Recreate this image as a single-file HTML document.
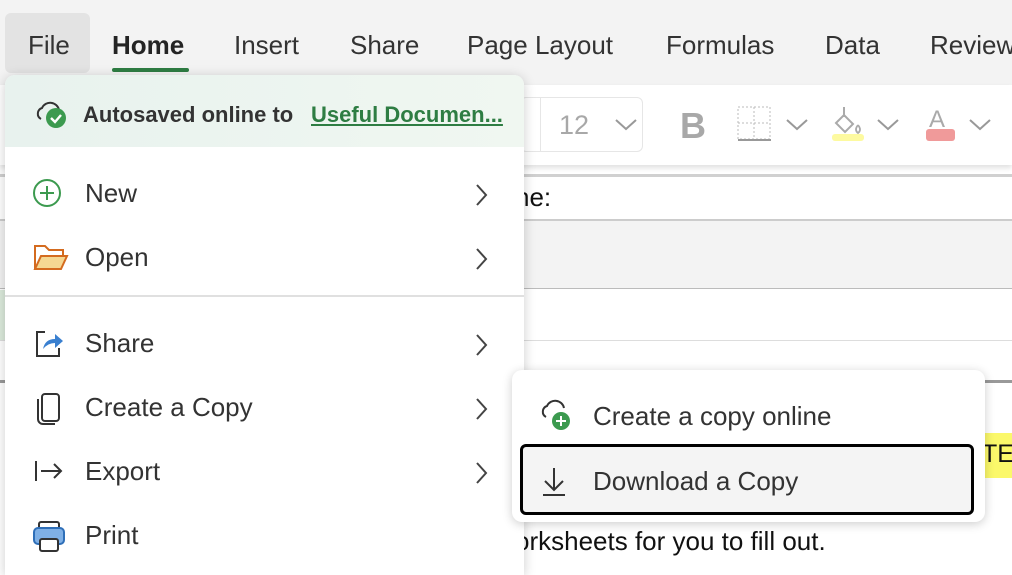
<!DOCTYPE html>
<html><head><style>
*{margin:0;padding:0;box-sizing:border-box}
body{width:1012px;height:562px;overflow:hidden;background:#fff;font-family:"Liberation Sans",sans-serif;position:relative;color:#242424}
.abs{position:absolute}
.tab{position:absolute;top:30px;font-size:26px;color:#333}
.mi{position:absolute;left:0;width:519px;height:64px}
.mi .t{position:absolute;left:80px;top:17px;font-size:26px;color:#333}
.mi .ch{position:absolute;left:470px;top:22px}
.mi .ic{position:absolute;left:28px;top:18px}
</style></head><body>
<div class="abs" style="left:0;top:0;width:1012px;height:85px;background:#f3f3f3"></div>
<div class="abs" style="left:5px;top:13px;width:85px;height:60px;background:#e3e3e3;border-radius:6px"></div>
<div class="tab" style="left:28px">File</div>
<div class="tab" style="left:112px;font-weight:bold;color:#242424">Home</div>
<div class="abs" style="left:112px;top:68px;width:77px;height:4px;background:#2e7d43;border-radius:2px"></div>
<div class="tab" style="left:234px">Insert</div>
<div class="tab" style="left:350px">Share</div>
<div class="tab" style="left:467px">Page Layout</div>
<div class="tab" style="left:666px">Formulas</div>
<div class="tab" style="left:825px">Data</div>
<div class="tab" style="left:930px">Review</div>
<div class="abs" style="left:0;top:85px;width:1012px;height:80px;background:#fff;box-shadow:0 3px 5px rgba(0,0,0,.12)"></div>
<div class="abs" style="left:520px;top:97px;width:123px;height:55px;border:1.5px solid #e6e6e6;border-radius:6px"></div>
<div class="abs" style="left:540px;top:98px;width:1px;height:54px;background:#e6e6e6"></div>
<div class="abs" style="left:559px;top:110px;font-size:27px;color:#a8a8a8">12</div>
<svg class="abs" style="left:614px;top:118px" width="24" height="14"><path d="M2 2l10 9 10-9" stroke="#999" stroke-width="2" fill="none"/></svg>
<div class="abs" style="left:680px;top:105px;font-size:36px;font-weight:bold;color:#a8a8a8">B</div>
<svg class="abs" style="left:737px;top:106px" width="36" height="36"><rect x="1" y="1" width="32" height="32" fill="none" stroke="#bbb" stroke-dasharray="2 2"/><path d="M17 1v32M1 17h32" stroke="#bbb" stroke-dasharray="2 2"/><path d="M1 34h33" stroke="#999" stroke-width="2"/></svg>
<svg class="abs" style="left:785px;top:118px" width="24" height="14"><path d="M2 2l10 9 10-9" stroke="#999" stroke-width="2" fill="none"/></svg>
<svg class="abs" style="left:830px;top:105px" width="36" height="38"><path d="M14 2v10M6 18l8-8 9 9-8 8z" stroke="#aaa" stroke-width="2" fill="none"/><path d="M28 20q4 5 0 8q-4-3 0-8" stroke="#aaa" stroke-width="1.8" fill="none"/><rect x="2" y="29" width="32" height="7" rx="3" fill="#fdfaa0"/></svg>
<svg class="abs" style="left:876px;top:118px" width="24" height="14"><path d="M2 2l10 9 10-9" stroke="#999" stroke-width="2" fill="none"/></svg>
<div class="abs" style="left:929px;top:106px;font-size:24px;color:#aaa">A</div>
<div class="abs" style="left:926px;top:129px;width:29px;height:12px;background:#f09a9a;border-radius:3px"></div>
<svg class="abs" style="left:968px;top:118px" width="24" height="14"><path d="M2 2l10 9 10-9" stroke="#999" stroke-width="2" fill="none"/></svg>
<div class="abs" style="left:0;top:174px;width:1012px;height:3px;background:#d0d0d0"></div>
<div class="abs" style="left:515px;top:182px;font-size:26px;color:#111">ne:</div>
<div class="abs" style="left:0;top:219px;width:1012px;height:2px;background:#ccc"></div>
<div class="abs" style="left:0;top:221px;width:1012px;height:67px;background:#f3f3f3"></div>
<div class="abs" style="left:0;top:288px;width:1012px;height:1px;background:#bbb"></div>
<div class="abs" style="left:0;top:340px;width:1012px;height:1px;background:#ddd"></div>
<div class="abs" style="left:0;top:290px;width:6px;height:50px;background:#dcebdc"></div>
<div class="abs" style="left:0;top:380px;width:1012px;height:3px;background:#999"></div>
<div class="abs" style="left:976px;top:433px;width:36px;height:45px;background:#fbf86a"></div>
<div class="abs" style="left:982px;top:440px;font-size:25px;color:#111">TE</div>
<div class="abs" style="left:515px;top:526px;font-size:26px;color:#111">orksheets for you to fill out.</div>
<div class="abs" style="left:5px;top:75px;width:519px;height:500px;background:#fff;border-radius:10px 10px 0 0;box-shadow:0 2px 12px rgba(0,0,0,.2);overflow:hidden">
 <div class="abs" style="left:0;top:0;width:519px;height:72px;background:linear-gradient(90deg,#e8f2ee,#f0f7f1)"></div>
 <svg class="abs" style="left:28px;top:22px" width="38" height="34"><path d="M8 22a6 6 0 0 1 1-11a9 9 0 0 1 17 2" stroke="#333" stroke-width="2" fill="none"/><circle cx="23" cy="21" r="10" fill="#3c9a4f"/><path d="M18 21l4 4 6-7" stroke="#fff" stroke-width="2.4" fill="none"/></svg>
 <div class="abs" style="left:78px;top:27px;font-size:22px;font-weight:bold;color:#333">Autosaved online to</div>
 <div class="abs" style="left:306px;top:27px;font-size:22px;font-weight:bold;color:#2e7d43;text-decoration:underline">Useful Documen...</div>
 <div class="mi" style="top:86px"><svg class="ic" width="30" height="30"><circle cx="14" cy="14" r="13" stroke="#3c9a4f" stroke-width="2" fill="none"/><path d="M14 7v14M7 14h14" stroke="#3c9a4f" stroke-width="2"/></svg><div class="t">New</div><svg class="ch" width="14" height="24"><path d="M2 2l9 10-9 10" stroke="#444" stroke-width="2" fill="none"/></svg></div>
 <div class="mi" style="top:150px"><svg class="ic" width="36" height="30"><path d="M2 26V3h10l4 4h14v6" stroke="#d46b1f" stroke-width="2" fill="none"/><path d="M2 26l6-13h26l-6 13z" fill="#f5d892" stroke="#d46b1f" stroke-width="2"/></svg><div class="t">Open</div><svg class="ch" width="14" height="24"><path d="M2 2l9 10-9 10" stroke="#444" stroke-width="2" fill="none"/></svg></div>
 <div class="abs" style="left:0;top:220px;width:519px;height:2px;background:#e0e0e0"></div>
 <div class="mi" style="top:236px"><svg class="ic" width="32" height="30"><path d="M12 3H4v24h22v-8" stroke="#333" stroke-width="2" fill="none"/><path d="M10 20q2-10 12-10V5l8 7-8 7v-5q-7 0-12 6z" fill="#3a80d0"/></svg><div class="t">Share</div><svg class="ch" width="14" height="24"><path d="M2 2l9 10-9 10" stroke="#444" stroke-width="2" fill="none"/></svg></div>
 <div class="mi" style="top:300px"><svg class="ic" width="32" height="32"><rect x="9" y="1" width="17" height="27" rx="3" stroke="#333" stroke-width="2" fill="none"/><path d="M5 6v20a5 5 0 0 0 5 5h12" stroke="#333" stroke-width="2" fill="none"/></svg><div class="t">Create a Copy</div><svg class="ch" width="14" height="24"><path d="M2 2l9 10-9 10" stroke="#444" stroke-width="2" fill="none"/></svg></div>
 <div class="mi" style="top:364px"><svg class="ic" width="32" height="30"><path d="M3 4v20M8 14h20M21 7l7 7-7 7" stroke="#333" stroke-width="2" fill="none"/></svg><div class="t">Export</div><svg class="ch" width="14" height="24"><path d="M2 2l9 10-9 10" stroke="#444" stroke-width="2" fill="none"/></svg></div>
 <div class="mi" style="top:428px"><svg class="ic" width="34" height="34"><rect x="6" y="1" width="20" height="8" rx="2" stroke="#333" stroke-width="2" fill="none"/><rect x="1" y="7" width="30" height="16" rx="4" fill="#7fb0e6" stroke="#2f6fb8" stroke-width="2"/><rect x="7" y="18" width="18" height="12" rx="2" fill="#fff" stroke="#333" stroke-width="2"/></svg><div class="t">Print</div></div>
</div>
<div class="abs" style="left:512px;top:370px;width:473px;height:152px;background:#fff;border-radius:10px;box-shadow:0 2px 10px rgba(0,0,0,.2)">
 <svg class="abs" style="left:27px;top:27px" width="36" height="36"><path d="M7 20a6 6 0 0 1 1-11a9 9 0 0 1 17 2" stroke="#333" stroke-width="2" fill="none"/><circle cx="22" cy="24" r="9" fill="#3c9a4f"/><path d="M22 19v10M17 24h10" stroke="#fff" stroke-width="2"/></svg>
 <div class="abs" style="left:81px;top:31px;font-size:26px;color:#333">Create a copy online</div>
 <div class="abs" style="left:8px;top:74px;width:454px;height:71px;background:#f4f4f4;border:3px solid #000;border-radius:6px">
  <svg class="abs" style="left:18px;top:20px" width="26" height="30"><path d="M13 1v22M4 14l9 9 9-9M2 28h22" stroke="#333" stroke-width="2" fill="none"/></svg>
  <div class="abs" style="left:70px;top:19px;font-size:26px;color:#333">Download a Copy</div>
 </div>
</div>
</body></html>
